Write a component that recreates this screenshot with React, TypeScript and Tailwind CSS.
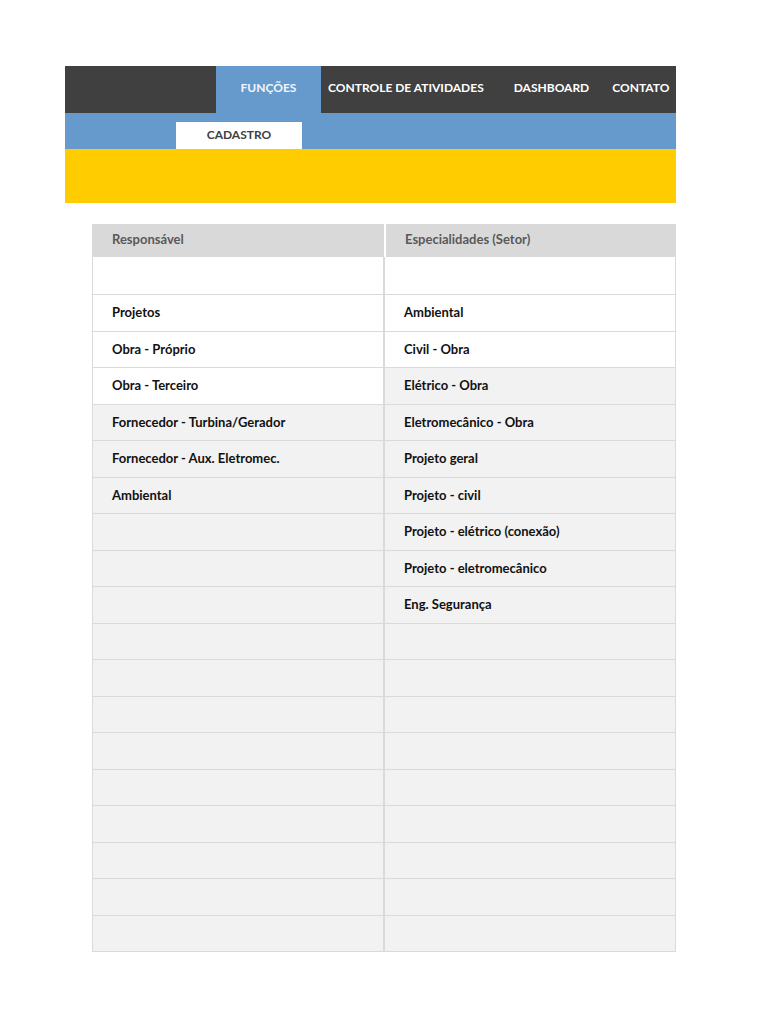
import React from "react";

const left = [
  "",
  "Projetos",
  "Obra - Próprio",
  "Obra - Terceiro",
  "Fornecedor - Turbina/Gerador",
  "Fornecedor - Aux. Eletromec.",
  "Ambiental",
  "", "", "", "", "", "", "", "", "", "", "", "",
];
const right = [
  "",
  "Ambiental",
  "Civil - Obra",
  "Elétrico - Obra",
  "Eletromecânico - Obra",
  "Projeto geral",
  "Projeto - civil",
  "Projeto - elétrico (conexão)",
  "Projeto - eletromecânico",
  "Eng. Segurança",
  "", "", "", "", "", "", "", "", "",
];

export default function App() {
  return (
    <div
      className="w-[768px] min-h-[1024px] bg-white"
      style={{ fontFamily: "Lato, 'Open Sans', sans-serif" }}
    >
      <div className="pt-[66px] pl-[65px]">
        <div className="w-[611px]">
          {/* top nav */}
          <div className="flex h-[47px] overflow-hidden whitespace-nowrap bg-[#404040] text-[12px] font-bold text-white">
            <div className="w-[151px] shrink-0" />
            <div className="flex w-[105px] shrink-0 items-center justify-center bg-[#6699cc] pb-[4px] text-[#f2f6fb]">
              FUNÇÕES
            </div>
            <div className="ml-[7px] flex shrink-0 items-center pb-[4px]">CONTROLE DE ATIVIDADES</div>
            <div className="ml-[30px] flex shrink-0 items-center pb-[4px]">DASHBOARD</div>
            <div className="ml-[23px] flex shrink-0 items-center pb-[4px]">CONTATO</div>
          </div>
          {/* sub nav */}
          <div className="flex h-[36px] items-end bg-[#6699cc] pl-[111px]">
            <div className="flex h-[27px] w-[126px] items-center justify-center bg-white pb-[2px] text-[12px] font-bold text-[#404040]">
              CADASTRO
            </div>
          </div>
          <div className="h-[54px] bg-[#ffcc00]" />
        </div>
      </div>

      {/* table */}
      <div className="ml-[92px] mt-[21px] w-[584px] text-[13px] font-bold">
        <div className="flex h-[33px] gap-[2px]">
          <div className="flex flex-1 items-center bg-[#d9d9d9] pb-[2px] pl-[20px] text-[#595959]">
            Responsável
          </div>
          <div className="flex w-[290px] items-center bg-[#d9d9d9] pb-[2px] pl-[19px] text-[#595959]">
            Especialidades (Setor)
          </div>
        </div>
        {left.map((l, i) => {
          const h = i === 0 ? "h-[38px]" : "h-[36.5px]";
          const lbg = i <= 3 ? "bg-white" : "bg-[#f2f2f2]";
          const rbg = i <= 2 ? "bg-white" : "bg-[#f2f2f2]";
          return (
            <div key={i} className={`flex ${h}`}>
              <div
                className={`flex flex-1 items-center border-b border-l border-r border-[#dadada] pl-[19px] text-[#111111] ${lbg}`}
              >
                {l}
              </div>
              <div
                className={`flex w-[292px] items-center border-b border-l border-r border-[#dadada] pl-[19px] text-[#111111] ${rbg}`}
              >
                {right[i]}
              </div>
            </div>
          );
        })}
      </div>
    </div>
  );
}
